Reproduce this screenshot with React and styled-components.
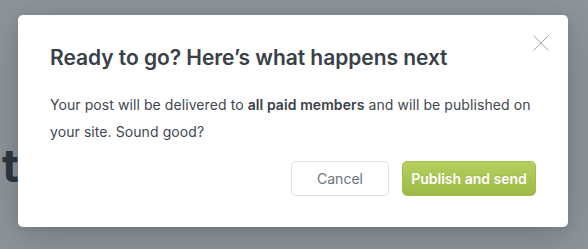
import React from 'react';
import styled, { createGlobalStyle } from 'styled-components';

const GlobalStyle = createGlobalStyle`
  html, body {
    margin: 0;
    padding: 0;
    width: 588px;
    height: 249px;
    overflow: hidden;
    background: #8d949a;
    font-family: Inter, "Noto Sans", sans-serif;
  }
`;

const Page = styled.div`
  position: relative;
  width: 588px;
  height: 249px;
  overflow: hidden;
`;

const Backdrop = styled.div`
  padding: 137px 0 0 2px;
  font-size: 46px;
  font-weight: 700;
  color: #2e3841;
  letter-spacing: -0.5px;
  white-space: nowrap;
`;

const Modal = styled.div`
  position: absolute;
  top: 15px;
  left: 18px;
  width: 550px;
  box-sizing: border-box;
  padding: 30px 32px 31px;
  background: #fff;
  border-radius: 5px;
  box-shadow: 0 10px 40px rgba(0, 0, 0, 0.18), 0 2px 8px rgba(0, 0, 0, 0.08);
`;

const Close = styled.button`
  position: absolute;
  top: 20px;
  right: 19px;
  width: 16px;
  height: 16px;
  padding: 0;
  border: 0;
  background: none;
  display: flex;
`;

const Title = styled.h1`
  margin: 0;
  font-size: 21px;
  line-height: 26px;
  font-weight: 600;
  color: #394047;
  letter-spacing: -0.05px;
`;

const Body = styled.p`
  margin: 20px 0 0;
  font-size: 14px;
  line-height: 27px;
  letter-spacing: 0.08px;
  color: #40474f;

  strong {
    font-weight: 600;
    color: #394047;
  }
`;

const Actions = styled.div`
  display: flex;
  justify-content: flex-end;
  gap: 13px;
  margin-top: 16px;
`;

const Button = styled.button`
  height: 35px;
  box-sizing: border-box;
  border-radius: 5px;
  font-family: inherit;
  font-size: 14px;
  padding: 0;
  cursor: pointer;
`;

const CancelButton = styled(Button)`
  width: 98px;
  background: #fff;
  border: 1px solid #dde1e5;
  color: #6b747d;
  font-weight: 400;
`;

const PublishButton = styled(Button)`
  width: 134px;
  border: 1px solid #a2bf45;
  background: linear-gradient(#b6d05f, #9cb945);
  color: #fff;
  font-weight: 600;
  text-shadow: 0 -1px 0 rgba(0, 0, 0, 0.08);
`;

export default function App() {
  return (
    <Page>
      <GlobalStyle />
      <Backdrop>testing the</Backdrop>
      <Modal>
        <Close aria-label="Close">
          <svg width="16" height="16" viewBox="0 0 16 16">
            <path d="M0.5 0.5 L15.5 15.5 M15.5 0.5 L0.5 15.5" stroke="#a3a8ad" strokeWidth="1" fill="none" />
          </svg>
        </Close>
        <Title>Ready to go? Here’s what happens next</Title>
        <Body>
          Your post will be delivered to <strong>all paid members</strong> and will be published on
          your site. Sound good?
        </Body>
        <Actions>
          <CancelButton>Cancel</CancelButton>
          <PublishButton>Publish and send</PublishButton>
        </Actions>
      </Modal>
    </Page>
  );
}
